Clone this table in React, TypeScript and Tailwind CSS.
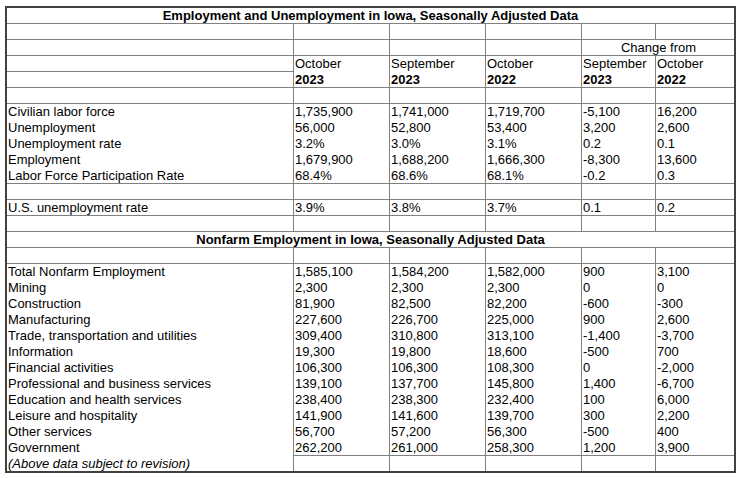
import clsx from 'clsx';
import type { ReactNode } from 'react';

const Cell = ({
  children,
  t = false,
  l = false,
  className,
}: {
  children?: ReactNode;
  t?: boolean;
  l?: boolean;
  className?: string;
}) => (
  <div
    className={clsx(
      'h-4 pl-px overflow-hidden whitespace-nowrap',
      t ? 'border-t border-t-[#808080]' : 'pt-px',
      l && 'border-l border-l-[#808080]',
      className
    )}
  >
    {children}
  </div>
);

const Row = ({ children }: { children: ReactNode }) => (
  <div className="grid grid-cols-[286px_96px_96px_96px_74px_79px]">{children}</div>
);

// one data line: label + five values
const DataRow = ({ cells, t = false }: { cells: string[]; t?: boolean }) => (
  <Row>
    <Cell t={t}>{cells[0]}</Cell>
    {cells.slice(1).map((c, i) => (
      <Cell key={i} t={t} l>
        {c}
      </Cell>
    ))}
  </Row>
);

const EmptyRow = () => <DataRow cells={['', '', '', '', '', '']} t />;

const TitleRow = ({ children, first = false }: { children: ReactNode; first?: boolean }) => (
  <div
    className={clsx(
      'text-center font-bold',
      first ? 'h-[15px]' : 'h-4 border-t border-t-[#808080]'
    )}
  >
    {children}
  </div>
);

const labor = [
  ['Civilian labor force', '1,735,900', '1,741,000', '1,719,700', '-5,100', '16,200'],
  ['Unemployment', '56,000', '52,800', '53,400', '3,200', '2,600'],
  ['Unemployment rate', '3.2%', '3.0%', '3.1%', '0.2', '0.1'],
  ['Employment', '1,679,900', '1,688,200', '1,666,300', '-8,300', '13,600'],
  ['Labor Force Participation Rate', '68.4%', '68.6%', '68.1%', '-0.2', '0.3'],
];

const nonfarm = [
  ['Total Nonfarm Employment', '1,585,100', '1,584,200', '1,582,000', '900', '3,100'],
  ['Mining', '2,300', '2,300', '2,300', '0', '0'],
  ['Construction', '81,900', '82,500', '82,200', '-600', '-300'],
  ['Manufacturing', '227,600', '226,700', '225,000', '900', '2,600'],
  ['Trade, transportation and utilities', '309,400', '310,800', '313,100', '-1,400', '-3,700'],
  ['Information', '19,300', '19,800', '18,600', '-500', '700'],
  ['Financial activities', '106,300', '106,300', '108,300', '0', '-2,000'],
  ['Professional and business services', '139,100', '137,700', '145,800', '1,400', '-6,700'],
  ['Education and health services', '238,400', '238,300', '232,400', '100', '6,000'],
  ['Leisure and hospitality', '141,900', '141,600', '139,700', '300', '2,200'],
  ['Other services', '56,700', '57,200', '56,300', '-500', '400'],
  ['Government', '262,200', '261,000', '258,300', '1,200', '3,900'],
];

export default function App() {
  return (
    <div className="min-h-screen bg-white pl-[5px] pt-[6px] font-['Liberation_Sans',Arial,sans-serif] text-[13px] leading-[15px] text-black">
      <div className="w-[731px] border-2 border-[#404040]">
        {/* Section 1 header */}
        <TitleRow first>Employment and Unemployment in Iowa, Seasonally Adjusted Data</TitleRow>
        <EmptyRow />
        <Row>
          <Cell t />
          <Cell t l />
          <Cell t l />
          <Cell t l />
          <Cell t l className="col-span-2 text-center">
            Change from
          </Cell>
        </Row>
        <Row>
          <Cell t />
          <Cell t l>October</Cell>
          <Cell t l>September</Cell>
          <Cell t l>October</Cell>
          <Cell t l>September</Cell>
          <Cell t l>October</Cell>
        </Row>
        <Row>
          <Cell t />
          <Cell l className="font-bold">2023</Cell>
          <Cell l className="font-bold">2023</Cell>
          <Cell l className="font-bold">2022</Cell>
          <Cell l className="font-bold">2023</Cell>
          <Cell l className="font-bold">2022</Cell>
        </Row>
        <EmptyRow />

        {labor.map((r, i) => (
          <DataRow key={r[0]} cells={r} t={i === 0} />
        ))}
        <EmptyRow />
        <DataRow cells={['U.S. unemployment rate', '3.9%', '3.8%', '3.7%', '0.1', '0.2']} t />
        <EmptyRow />

        {/* Section 2 */}
        <TitleRow>Nonfarm Employment in Iowa, Seasonally Adjusted Data</TitleRow>
        <EmptyRow />
        {nonfarm.map((r, i) => (
          <DataRow key={r[0]} cells={r} t={i === 0} />
        ))}
        <Row>
          <Cell className="italic">(Above data subject to revision)</Cell>
          <Cell t l />
          <Cell t l />
          <Cell t l />
          <Cell t l />
          <Cell t l />
        </Row>
      </div>
    </div>
  );
}
